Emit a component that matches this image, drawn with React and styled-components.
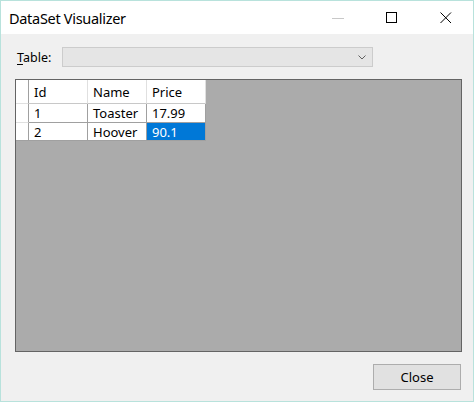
import React from "react";
import styled, { createGlobalStyle } from "styled-components";

const GlobalStyle = createGlobalStyle`
  html, body {
    margin: 0;
    padding: 0;
    background: #ffffff;
  }
  body {
    font-family: "Noto Sans", "Liberation Sans", sans-serif;
  }
`;

const Window = styled.div`
  width: 474px;
  height: 402px;
  box-sizing: border-box;
  border: 1px solid #b8e2dc;
  display: flex;
  flex-direction: column;
  background: #f0f0f0;
`;

const TitleBar = styled.div`
  height: 33px;
  background: #ffffff;
  display: flex;
  align-items: center;
`;

const Title = styled.span`
  flex: 1;
  padding-left: 8px;
  font-size: 14.5px;
  color: #000000;
  letter-spacing: -0.3px;
`;

const CaptionButton = styled.div`
  width: 54px;
  height: 33px;
  display: flex;
  align-items: center;
  justify-content: center;
`;

const Body = styled.div`
  flex: 1;
  display: flex;
  flex-direction: column;
  padding: 13px 11px 11px 14px;
`;

const ComboRow = styled.div`
  display: flex;
  align-items: center;
  padding-left: 2px;
  height: 20px;
`;

const Label = styled.span`
  width: 45px;
  font-size: 12.5px;
  color: #000000;

  u {
    text-decoration: underline;
    text-underline-offset: 2px;
  }
`;

const Combo = styled.div`
  width: 311px;
  height: 20px;
  box-sizing: border-box;
  border: 1px solid #cccccc;
  background: #e5e5e5;
  display: flex;
  align-items: center;
  justify-content: flex-end;
  padding-right: 6px;
`;

const GridPanel = styled.div`
  margin-top: 12px;
  height: 273px;
  box-sizing: border-box;
  border: 1px solid #646464;
  background: #ababab;
  display: flex;
  align-items: flex-start;
`;

const Table = styled.div`
  display: grid;
  grid-template-columns: 13px 59px 59px 59px;
  grid-template-rows: 24px 19px 18px;
  background: #ffffff;
`;

const Cell = styled.div`
  box-sizing: border-box;
  border-right: 1px solid ${p => (p.header ? "#e0e0e0" : "#a0a0a0")};
  border-bottom: 1px solid ${p => (p.header ? "#c8c8c8" : "#a0a0a0")};
  padding-left: 5px;
  font-size: 13px;
  display: flex;
  align-items: center;
  color: ${p => (p.selected ? "#ffffff" : "#000000")};
  background: ${p => (p.selected ? "#0078d7" : "#ffffff")};
`;

const RowHead = styled.div`
  box-sizing: border-box;
  border-right: 1px solid #a0a0a0;
  border-bottom: 1px solid ${p => (p.last ? "#a0a0a0" : "#e0e0e0")};
  background: #ffffff;
`;

const Footer = styled.div`
  margin-top: 12px;
  display: flex;
  justify-content: flex-end;
  padding-right: 1px;
`;

const Button = styled.button`
  width: 88px;
  height: 26px;
  box-sizing: border-box;
  border: 1px solid #adadad;
  background: #e1e1e1;
  font-family: "Noto Sans", "Liberation Sans", sans-serif;
  font-size: 13px;
  color: #000000;
  padding: 0;
`;

const rows = [
  { id: "1", name: "Toaster", price: "17.99" },
  { id: "2", name: "Hoover", price: "90.1", selected: true },
];

export default function App() {
  return (
    <Window>
      <GlobalStyle />
      <TitleBar>
        <Title>DataSet Visualizer</Title>
        <CaptionButton>
          <svg width="12" height="12" viewBox="0 0 12 12">
            <line x1="0" y1="6.5" x2="12" y2="6.5" stroke="#c8c8c8" strokeWidth="1" />
          </svg>
        </CaptionButton>
        <CaptionButton>
          <svg width="12" height="12" viewBox="0 0 12 12">
            <rect x="0.5" y="0.5" width="10" height="10" fill="none" stroke="#000" strokeWidth="1" />
          </svg>
        </CaptionButton>
        <CaptionButton>
          <svg width="12" height="12" viewBox="0 0 12 12">
            <path d="M0.5 0.5 L11 11 M11 0.5 L0.5 11" stroke="#000" strokeWidth="1" fill="none" />
          </svg>
        </CaptionButton>
      </TitleBar>
      <Body>
        <ComboRow>
          <Label>
            <u>T</u>able:
          </Label>
          <Combo>
            <svg width="8" height="5" viewBox="0 0 8 5">
              <path d="M0.5 0.5 L4 4 L7.5 0.5" stroke="#606060" strokeWidth="1" fill="none" />
            </svg>
          </Combo>
        </ComboRow>
        <GridPanel>
          <Table>
            <RowHead />
            <Cell header>Id</Cell>
            <Cell header>Name</Cell>
            <Cell header>Price</Cell>
            {rows.map((r, i) => (
              <React.Fragment key={r.id}>
                <RowHead last={i === rows.length - 1} />
                <Cell>{r.id}</Cell>
                <Cell>{r.name}</Cell>
                <Cell selected={r.selected}>{r.price}</Cell>
              </React.Fragment>
            ))}
          </Table>
        </GridPanel>
        <Footer>
          <Button>Close</Button>
        </Footer>
      </Body>
    </Window>
  );
}
